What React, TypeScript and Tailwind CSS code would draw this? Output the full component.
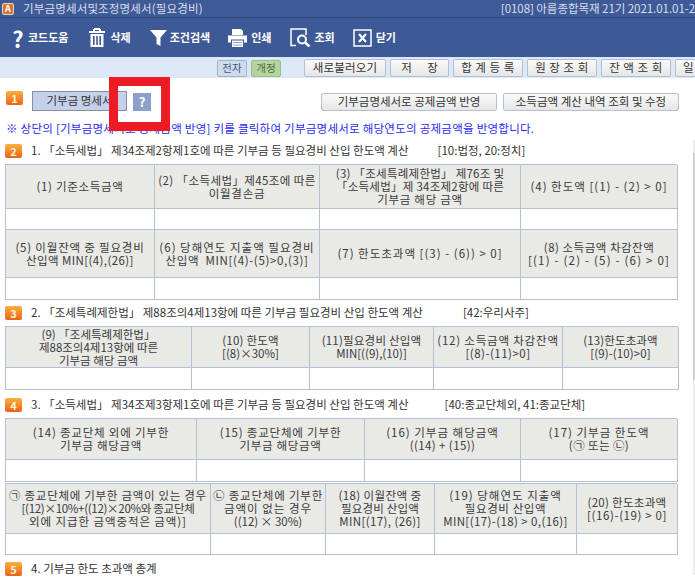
import React from "react";

const FONT = "font-['Noto_Sans_CJK_KR',sans-serif]";

type Line = string | [string, string];

function Cell({ children, h }: { children?: React.ReactNode; h?: boolean }) {
  return (
    <div
      className={`flex flex-col items-center justify-center text-center text-[11.5px] leading-[13px] text-[#3a3a3a] border-r border-b border-[#b4c0d6] whitespace-pre overflow-hidden ${h ? "bg-[#e9e9e6]" : "bg-white"}`}
    >
      {children}
    </div>
  );
}

function Lines({ t }: { t: Line[] }) {
  return (
    <>
      {t.map((x) =>
        typeof x === "string" ? (
          <span key={x} className="tracking-[0.7px]">{x}</span>
        ) : (
          <span key={x[0]} className={x[1]}>{x[0]}</span>
        ),
      )}
    </>
  );
}

function Badge({ n }: { n: number }) {
  return (
    <span className="flex h-[14px] w-[17px] shrink-0 items-center justify-center rounded-[2px] bg-gradient-to-b from-[#fbb040] to-[#e8611a] text-[11px] font-bold leading-none text-[#fff3c8]">
      {n}
    </span>
  );
}

function SectionHead({ n, title, note, gap }: { n: number; title: string; note: string; gap: string }) {
  return (
    <div className="flex h-[14px] items-center pl-[5px] text-[11.5px] text-[#333]">
      <Badge n={n} />
      <span className="ml-[9px] whitespace-nowrap">{title}</span>
      <span className={`whitespace-nowrap ${gap}`}>{note}</span>
    </div>
  );
}

function ToolBtn({ icon, label, className }: { icon: React.ReactNode; label: string; className: string }) {
  return (
    <div className={`flex shrink-0 items-center ${className}`}>
      {icon}
      <span className="ml-[3px] whitespace-nowrap text-[11px] font-bold text-white">{label}</span>
    </div>
  );
}

function GreyBtn({ label, w, className = "" }: { label: string; w: string; className?: string }) {
  return (
    <div
      className={`flex h-[18px] shrink-0 items-center justify-center rounded-[2px] border border-[#b3c0d8] bg-gradient-to-b from-[#fafafa] to-[#e6e6e6] text-[11.5px] text-[#333] whitespace-pre ${w} ${className}`}
    >
      {label}
    </div>
  );
}

export default function App() {
  return (
    <div className={`relative h-[588px] w-[695px] overflow-hidden bg-white ${FONT}`}>
      {/* title bar */}
      <div className="flex h-[18px] items-center justify-between border-b border-[#2d4679] bg-[#3f5b97] text-[11.5px] text-[#d9dfeb]">
        <div className="flex shrink-0 items-center pl-[2px]">
          <span className="flex h-[12px] w-[12px] items-center justify-center rounded-[2px] border border-[#e8d9b0] bg-[#d9743a] text-[9px] font-bold leading-none text-white">A</span>
          <span className="ml-[9px] whitespace-nowrap tracking-[0.15px]">기부금명세서및조정명세서(필요경비)</span>
        </div>
        <span className="shrink-0 whitespace-nowrap tracking-[-0.05px]">[0108] 아름종합목재 21기 2021.01.01-2</span>
      </div>
      {/* toolbar */}
      <div className="flex h-[39px] items-center bg-[#3e5a96]">
        <ToolBtn
          className="ml-[11px]"
          label="코드도움"
          icon={<span className="w-[14px] text-center text-[22px] font-bold leading-none text-white">?</span>}
        />
        <ToolBtn
          className="ml-[21px]"
          label="삭제"
          icon={
            <svg width="18" height="19" viewBox="0 0 18 19" fill="#fff">
              <path d="M5 0h6v1h1v2h4v2H0V3h4V1h1zM6 2v1h4V2z" fillRule="evenodd" />
              <path d="M1.500 6h13v13h-13zM4 8v9h1.600V8zm3.200 0v9h1.600V8zm3.200 0v9H12V8z" fillRule="evenodd" />
            </svg>
          }
        />
        <ToolBtn
          className="ml-[19px]"
          label="조건검색"
          icon={
            <svg width="17" height="18" viewBox="0 0 17 18" fill="#fff">
              <path d="M0 1h17l-6.500 7.500V17L6.500 15V8.500z" />
            </svg>
          }
        />
        <ToolBtn
          className="ml-[17px]"
          label="인쇄"
          icon={
            <svg width="21" height="18" viewBox="0 0 21 18" fill="#fff">
              <path d="M5 0h9l2 2v4H5z" />
              <path d="M1 6.500h19v7h-3v-3H4v3H1z" />
              <path d="M5 11.500h11V18H5z" />
              <path d="M6 13h9v1H6zM6 15.500h9v1H6z" fill="#8fa1c6" />
            </svg>
          }
        />
        <ToolBtn
          className="ml-[19px]"
          label="조회"
          icon={
            <svg width="21" height="19" viewBox="0 0 21 19" fill="none" stroke="#fff" strokeWidth="1.5">
              <path d="M6 17.500H1V1h15v6" />
              <circle cx="12" cy="11.500" r="4" strokeWidth="2" />
              <path d="M15 14.500L19.500 18.500" strokeWidth="2.400" />
            </svg>
          }
        />
        <ToolBtn
          className="ml-[18px]"
          label="닫기"
          icon={
            <svg width="20" height="18" viewBox="0 0 20 18" fill="none" stroke="#fff">
              <rect x="1" y="1" width="17" height="16" strokeWidth="1.500" />
              <path d="M6 5l7 8M13 5l-7 8" strokeWidth="2.200" />
            </svg>
          }
        />
      </div>
      {/* sub bar */}
      <div className="flex h-[21px] items-center bg-[#dce8f6] pl-[217px] pt-[1px]">
        <div className="flex h-[17px] w-[30px] shrink-0 items-center justify-center rounded-[2px] border border-[#9fb3d0] bg-[#cfdcec] text-[10.5px] text-[#44597a]">전자</div>
        <div className="ml-[4px] flex h-[17px] w-[30px] shrink-0 items-center justify-center rounded-[2px] border border-[#9dbb8d] bg-[#b3d49f] text-[10.5px] text-[#4c6f3c]">개정</div>
        <GreyBtn label="새로불러오기" w="w-[82px]" className="ml-[23px] tracking-[0.2px]" />
        <GreyBtn label="저      장" w="w-[59px]" className="ml-[4px]" />
        <GreyBtn label="합 계 등 록" w="w-[70px]" className="ml-[4px] tracking-[0.5px]" />
        <GreyBtn label="원 장 조 회" w="w-[70px]" className="ml-[4px] tracking-[0.5px]" />
        <GreyBtn label="잔 액 조 회" w="w-[70px]" className="ml-[4px] tracking-[0.5px]" />
        <GreyBtn label="일" w="w-[40px]" className="ml-[4px] justify-start pl-[7px]" />
      </div>
      {/* body */}
      <div className="relative pr-[2px]">
        <div className="mt-[13px] flex h-[20px] items-start pl-[6px]">
          <Badge n={1} />
          <div className="ml-[9px] flex h-[20px] w-[95px] shrink-0 items-center justify-center border border-[#8d8d9a] bg-[#c3d1ea] text-[11.5px] text-[#333] whitespace-nowrap">기부금 명세서</div>
          <div className="ml-[6px] mt-[2px] flex h-[18px] w-[18px] shrink-0 items-center justify-center bg-[#8da0cd] text-[13px] font-bold text-white">?</div>
          <GreyBtn label="기부금명세서로 공제금액 반영" w="w-[176px]" className="ml-[170px] mt-[2px]" />
          <GreyBtn label="소득금액 계산 내역 조회 및 수정" w="w-[176px]" className="ml-[6px] mt-[2px]" />
        </div>
        <p className="ml-[6px] mt-[10px] whitespace-nowrap text-[11.5px] leading-[14px] tracking-[0.25px] text-[#2a2af0]">
          ※ 상단의 [기부금명세서로 공제금액 반영] 키를 클릭하여 기부금명세서로 해당연도의 공제금액을 반영합니다.
        </p>
        <div className="mt-[9px]">
          <SectionHead n={2} title="1. 「소득세법」 제34조제2항제1호에 따른 기부금 등 필요경비 산입 한도액 계산" note="[10:법정, 20:정치]" gap="ml-[29px]" />
        </div>
        {/* table 1 */}
        <div className="ml-[5px] mt-[6px] grid w-[672px] grid-cols-[149px_165px_201px_157px] grid-rows-[44px_21px_48px_22px] border-l border-t border-[#b4c0d6]">
          <Cell h><Lines t={["(1) 기준소득금액"]} /></Cell>
          <Cell h><Lines t={[["(2) 「소득세법」제45조에 따른", "tracking-[0.4px]"], "이월결손금"]} /></Cell>
          <Cell h><Lines t={[["(3) 「조세특례제한법」 제76조 및", "tracking-[0.25px]"], ["「소득세법」제 34조제2항에 따른", "tracking-[0.25px]"], "기부금 해당 금액"]} /></Cell>
          <Cell h><Lines t={[["(4) 한도액 [(1) - (2) > 0]", "tracking-[1px]"]]} /></Cell>
          <Cell /><Cell /><Cell /><Cell />
          <Cell h><Lines t={[["(5) 이월잔액 중 필요경비", "tracking-[0.8px]"], ["산입액 MIN[(4),(26)]", "tracking-[0.4px]"]]} /></Cell>
          <Cell h><Lines t={[["(6) 당해연도 지출액 필요경비", "tracking-[1px]"], ["산입액  MIN[(4)-(5)>0,(3)]", "tracking-[0.65px]"]]} /></Cell>
          <Cell h><Lines t={[["(7) 한도초과액 [(3) - (6)) > 0]", "tracking-[1px]"]]} /></Cell>
          <Cell h><Lines t={[["(8) 소득금액 차감잔액", "tracking-[0.5px]"], ["[(1) - (2) - (5) - (6) > 0]", "tracking-[1.2px]"]]} /></Cell>
          <Cell /><Cell /><Cell /><Cell />
        </div>
        <div className="mt-[6px]">
          <SectionHead n={3} title="2. 「조세특례제한법」 제88조의4제13항에 따른 기부금 필요경비 산입 한도액 계산" note="[42:우리사주]" gap="ml-[40px]" />
        </div>
        {/* table 2 */}
        <div className="ml-[5px] mt-[6px] grid w-[673px] grid-cols-[186px_118px_124px_129px_116px] grid-rows-[41px_22px] border-l border-t border-[#b4c0d6]">
          <Cell h><Lines t={[["(9) 「조세특례제한법」", "tracking-[0px]"], ["제88조의4제13항에 따른", "tracking-[0px]"], ["기부금 해당 금액", "tracking-[0px]"]]} /></Cell>
          <Cell h><Lines t={[["(10) 한도액", "tracking-[0.2px]"], ["[(8)×30%]", "tracking-[0px]"]]} /></Cell>
          <Cell h><Lines t={[["(11)필요경비 산입액", "tracking-[0.2px]"], ["MIN[((9),(10)]", "tracking-[0px]"]]} /></Cell>
          <Cell h><Lines t={[["(12) 소득금액 차감잔액", "tracking-[0.8px]"], ["[(8)-(11)>0]", "tracking-[0.5px]"]]} /></Cell>
          <Cell h><Lines t={[["(13)한도초과액", "tracking-[0.1px]"], ["[(9)-(10)>0]", "tracking-[0.1px]"]]} /></Cell>
          <Cell /><Cell /><Cell /><Cell /><Cell />
        </div>
        <div className="mt-[8px]">
          <SectionHead n={4} title="3. 「소득세법」 제34조제3항제1호에 따른 기부금 등 필요경비 산입 한도액 계산" note="[40:종교단체외, 41:종교단체]" gap="ml-[36px]" />
        </div>
        {/* table 3 */}
        <div className="ml-[5px] mt-[6px] grid w-[672px] grid-cols-[191px_168px_156px_157px] grid-rows-[41px_22px] border-l border-t border-[#b4c0d6]">
          <Cell h><Lines t={[["(14) 종교단체 외에 기부한", "tracking-[0.8px]"], "기부금 해당금액"]} /></Cell>
          <Cell h><Lines t={[["(15) 종교단체에 기부한", "tracking-[0.8px]"], "기부금 해당금액"]} /></Cell>
          <Cell h><Lines t={[["(16) 기부금 해당금액", "tracking-[1px]"], ["((14) + (15))", "tracking-[0.4px]"]]} /></Cell>
          <Cell h><Lines t={[["(17) 기부금 한도액", "tracking-[1px]"], ["(㉠ 또는 ㉡)", "tracking-[0.4px]"]]} /></Cell>
          <Cell /><Cell /><Cell /><Cell />
        </div>
        {/* table 4 */}
        <div className="ml-[5px] mt-[1px] grid w-[672px] grid-cols-[205px_115px_109px_142px_101px] grid-rows-[50px_21px] border-l border-t border-[#b4c0d6]">
          <Cell h><Lines t={["㉠ 종교단체에 기부한 금액이 있는 경우", ["[(12)×10%+((12)×20%와 종교단체", "tracking-[-0.3px]"], ["외에 지급한 금액중적은 금액)]", "tracking-[0.9px]"]]} /></Cell>
          <Cell h><Lines t={[["㉡ 종교단체에 기부한", "tracking-[0.8px]"], ["금액이 없는 경우", "tracking-[1px]"], ["((12) × 30%)", "tracking-[0px]"]]} /></Cell>
          <Cell h><Lines t={[["(18) 이월잔액 중", "tracking-[0.4px]"], ["필요경비 산입액", "tracking-[0.2px]"], ["MIN[(17), (26)]", "tracking-[0.4px]"]]} /></Cell>
          <Cell h><Lines t={[["(19) 당해연도 지출액", "tracking-[1px]"], ["필요경비 산입액", "tracking-[0.6px]"], ["MIN[(17)-(18) > 0,(16)]", "tracking-[0.4px]"]]} /></Cell>
          <Cell h><Lines t={[["(20) 한도초과액", "tracking-[0.3px]"], ["[(16)-(19) > 0]", "tracking-[0.6px]"]]} /></Cell>
          <Cell /><Cell /><Cell /><Cell /><Cell />
        </div>
        <div className="mt-[7px]">
          <SectionHead n={5} title="4. 기부금 한도 초과액 총계" note="" gap="" />
        </div>
      </div>
      {/* scrollbar */}
      <div className="absolute right-0 top-[140px] h-[435px] w-[2px] bg-[#ececec]">
        <div className="mt-[13px] h-[227px] w-full bg-[#d2d2d2]" />
      </div>
      {/* red annotation */}
      <div className="absolute left-[109px] top-[77px] h-[54px] w-[61px] border-[9px] border-[#ed1c24]" />
    </div>
  );
}
